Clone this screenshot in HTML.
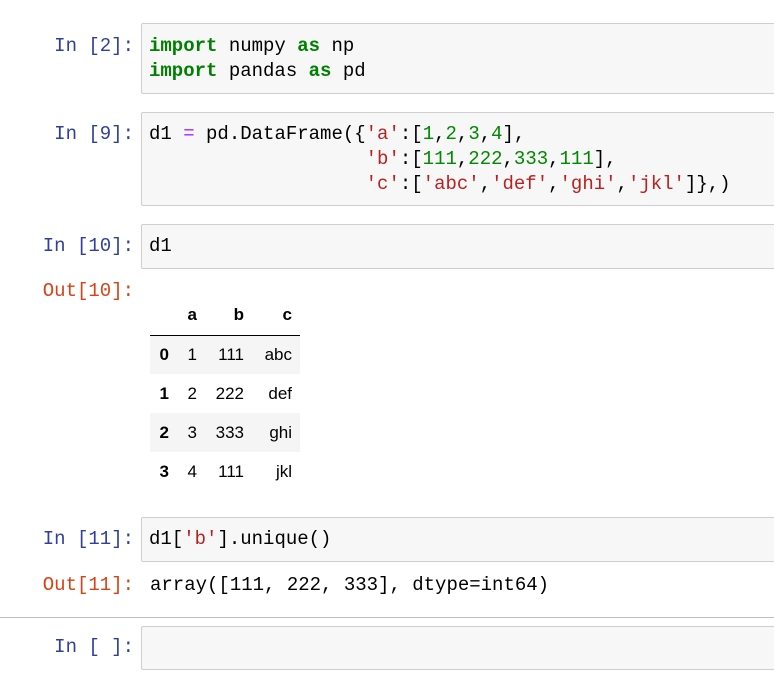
<!DOCTYPE html>
<html><head><style>
body{margin:0;width:774px;height:676px;background:#fff;position:relative;overflow:hidden;font-family:"Liberation Mono",monospace;font-size:19px;}
.p{position:absolute;right:640px;white-space:pre;line-height:25px;}
.in{color:#303F9F}.out{color:#D84315}
.box{position:absolute;left:141px;width:640px;background:#f7f7f7;border:1px solid #cfcfcf;border-radius:2px;box-sizing:border-box;}
.c{position:absolute;left:149px;white-space:pre;line-height:25px;color:#000}
.k{color:#008000;font-weight:bold}.s{color:#BA2121}.n{color:#008800}.o{color:#AA22FF}
table{position:absolute;left:150px;top:296px;border-collapse:collapse;font-family:"Liberation Sans",Arial,sans-serif;font-size:17px;color:#000;table-layout:fixed;width:150px}
td,th{height:39px;padding:0 8px 0 0;text-align:right;box-sizing:border-box}
thead th{border-bottom:1px solid #000;height:39px}
tbody tr:nth-child(odd){background:#f5f5f5}
</style></head><body>
<div class="p in" style="top:34px">In [2]:</div>
<div class="box" style="top:23px;height:71px"></div>
<div class="c" style="top:34px"><span class="k">import</span> numpy <span class="k">as</span> np
<span class="k">import</span> pandas <span class="k">as</span> pd</div>

<div class="p in" style="top:122px">In [9]:</div>
<div class="box" style="top:112px;height:94px"></div>
<div class="c" style="top:122px">d1 <span class="o">=</span> pd.DataFrame({<span class="s">'a'</span>:[<span class="n">1</span>,<span class="n">2</span>,<span class="n">3</span>,<span class="n">4</span>],
                   <span class="s">'b'</span>:[<span class="n">111</span>,<span class="n">222</span>,<span class="n">333</span>,<span class="n">111</span>],
                   <span class="s">'c'</span>:[<span class="s">'abc'</span>,<span class="s">'def'</span>,<span class="s">'ghi'</span>,<span class="s">'jkl'</span>]},)</div>

<div class="p in" style="top:234px">In [10]:</div>
<div class="box" style="top:224px;height:45px"></div>
<div class="c" style="top:234px">d1</div>

<div class="p out" style="top:279px">Out[10]:</div>
<table>
<colgroup><col style="width:27px"><col style="width:28px"><col style="width:47px"><col style="width:48px"></colgroup>
<thead><tr><th></th><th>a</th><th>b</th><th>c</th></tr></thead>
<tbody>
<tr><th>0</th><td>1</td><td>111</td><td>abc</td></tr>
<tr><th>1</th><td>2</td><td>222</td><td>def</td></tr>
<tr><th>2</th><td>3</td><td>333</td><td>ghi</td></tr>
<tr><th>3</th><td>4</td><td>111</td><td>jkl</td></tr>
</tbody></table>

<div class="p in" style="top:527px">In [11]:</div>
<div class="box" style="top:517px;height:45px"></div>
<div class="c" style="top:527px">d1[<span class="s">'b'</span>].unique()</div>

<div class="p out" style="top:573px">Out[11]:</div>
<div class="c" style="top:573px;left:150px">array([111, 222, 333], dtype=int64)</div>

<div style="position:absolute;left:0;top:617px;width:774px;height:1px;background:#bdbdbd"></div>
<div class="p in" style="top:635px">In [ ]:</div>
<div class="box" style="top:626px;height:44px"></div>
</body></html>
